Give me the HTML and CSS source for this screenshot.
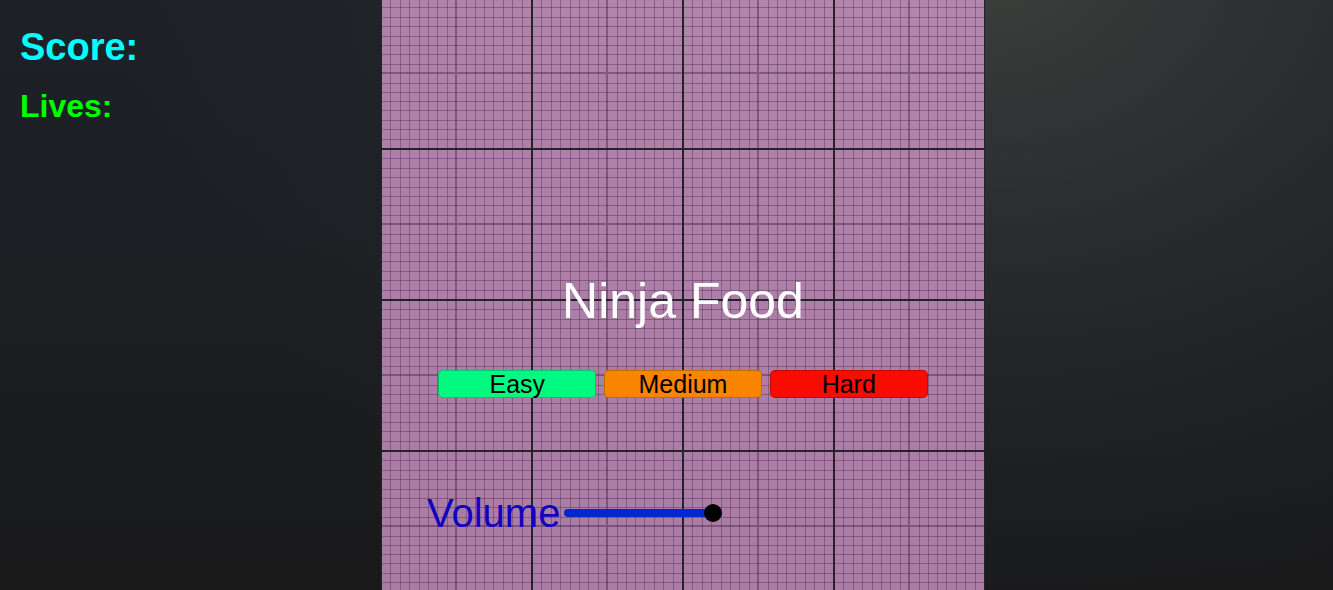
FILE: index.html
```
<!DOCTYPE html>
<html lang="en">
  <head>
    <meta charset="utf-8">
    <title>Ninja Food</title>
    <meta name="viewport" content="width=device-width, initial-scale=1">
    <link rel="stylesheet" href="styles.css">
  </head>
  <body>
    <div class="game">
      <div class="stats">
        <div class="score">Score:</div>
        <div class="lives">Lives:</div>
      </div>
      <main class="board">
        <svg class="grid" aria-hidden="true">
          <defs>
            <pattern id="cells" width="151" height="151" x="1" y="-1" patternUnits="userSpaceOnUse">
              <!-- small squares -->
              <path class="thin" d="M8 0h1v151h-1zM18 0h1v151h-1zM27 0h1v151h-1zM37 0h1v151h-1zM46 0h1v151h-1zM55 0h1v151h-1zM65 0h1v151h-1zM84 0h1v151h-1zM93 0h1v151h-1zM102 0h1v151h-1zM111 0h1v151h-1zM121 0h1v151h-1zM130 0h1v151h-1zM140 0h1v151h-1z"/>
              <path class="thin" d="M0 8h151v1h-151zM0 18h151v1h-151zM0 27h151v1h-151zM0 37h151v1h-151zM0 46h151v1h-151zM0 55h151v1h-151zM0 65h151v1h-151zM0 84h151v1h-151zM0 93h151v1h-151zM0 102h151v1h-151zM0 111h151v1h-151zM0 121h151v1h-151zM0 130h151v1h-151zM0 140h151v1h-151z"/>
              <!-- half lines -->
              <path class="mid" d="M73 0h2v151h-2zM0 73h151v2h-151z"/>
              <!-- big squares -->
              <path class="thick" d="M149 0h2v151h-2zM0 149h151v2h-151z"/>
            </pattern>
          </defs>
          <rect width="100%" height="100%" fill="url(#cells)"/>
        </svg>
        <h1 class="title">Ninja Food</h1>
        <div class="levels">
          <button class="button easy">Easy</button>
          <button class="button medium">Medium</button>
          <button class="button hard">Hard</button>
        </div>
        <div class="volume">
          <label for="volume">Volume</label>
          <input class="slider" type="range" id="volume" min="0" max="100" value="100">
        </div>
      </main>
    </div>
  </body>
</html>
```
FILE: styles.css
```
body {
  margin: 0;
  font-family: "Liberation Sans", Arial, sans-serif;
}
.game {
  display: grid;
  grid-template-columns: 381fr 604fr 348fr;
  min-height: 100vh;
  background:
    radial-gradient(ellipse 65% 115% at 74% -8%, #3e403d, rgba(53, 55, 55, 0.85) 25%, rgba(42, 46, 49, 0.7) 50%, rgba(35, 38, 41, 0.4) 75%, rgba(32, 35, 38, 0)),
    linear-gradient(#1d2026, #1c1f23 40%, #1b1c1e 75%, #19191a);
}
.stats {
  padding: 25px 20px;
  font-weight: bold;
}
.score {
  color: #00ffff;
  font-size: 38px;
  line-height: 44px;
}
.lives {
  margin-top: 19px;
  color: #00ff00;
  font-size: 32px;
  line-height: 36px;
}
.board {
  position: relative;
  display: flex;
  flex-direction: column;
  align-items: center;
  justify-content: flex-end;
  padding-bottom: 54px;
  background: linear-gradient(15deg, #aa7ba4, #ae7fa8 60%, #b387ad);
}
.grid {
  position: absolute;
  inset: 0;
  width: 100%;
  height: 100%;
}
.thin {
  fill: rgba(60, 30, 65, 0.36);
}
.mid {
  fill: rgba(60, 30, 65, 0.42);
}
.thick {
  fill: #242329;
}
.title, .levels, .volume {
  z-index: 1;
}
.title {
  margin: 0 0 41px;
  color: white;
  font-size: 50px;
  font-weight: normal;
  line-height: 56px;
}
.levels {
  display: flex;
  gap: 8px;
  width: 81%;
}
.button {
  flex: 1;
  height: 28px;
  padding: 0;
  border: 1px solid rgba(0, 0, 0, 0.2);
  border-radius: 5px;
  color: black;
  font-family: inherit;
  font-size: 25px;
  line-height: 26px;
  cursor: pointer;
}
.easy {
  background-color: #00f980;
}
.medium {
  background-color: #f88400;
}
.hard {
  background-color: #f80c00;
}
.volume {
  display: flex;
  align-items: center;
  align-self: flex-start;
  gap: 4px;
  margin: 92px 0 0 46px;
  color: #1000c0;
  font-size: 40px;
  line-height: 46px;
}
.slider {
  -webkit-appearance: none;
  appearance: none;
  width: 158px;
  height: 18px;
  margin: 0;
  background: transparent;
  cursor: pointer;
}
.slider::-webkit-slider-runnable-track {
  height: 8px;
  border-radius: 4px;
  background: #0028d0;
}
.slider::-webkit-slider-thumb {
  -webkit-appearance: none;
  width: 18px;
  height: 18px;
  margin-top: -5px;
  border-radius: 50%;
  background: black;
}
```
